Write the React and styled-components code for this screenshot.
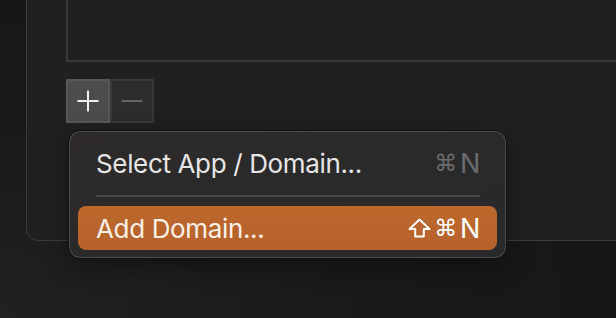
import React from "react";
import styled, { createGlobalStyle } from "styled-components";

const Global = createGlobalStyle`
  html, body { margin: 0; padding: 0; background: #17181a; overflow: hidden; }
  * { box-sizing: border-box; }
`;

const Page = styled.div`
  position: relative;
  width: 616px;
  height: 318px;
  overflow: hidden;
  padding-left: 26px;
  background: radial-gradient(ellipse at 0% 100%, #202123 0%, #18191b 45%, #141517 100%);
  font-family: Inter, "Noto Sans", "DejaVu Sans", sans-serif;
`;

const Window = styled.div`
  width: 640px;
  height: 262px;
  margin-top: -21px;
  border: 1px solid #3c3c3e;
  border-radius: 12px;
  background: #1f2022;
  padding-left: 39px;
`;

const Table = styled.div`
  height: 82px;
  border: 2px solid #38393b;
  background: #1f2022;
  margin-right: -40px;
`;

const ButtonBar = styled.div`
  display: flex;
  margin-top: 17px;
`;

const SegButton = styled.div`
  width: 44px;
  height: 44px;
  display: flex;
  align-items: center;
  justify-content: center;
  border: 2px solid ${(p) => (p.$pressed ? "#575859" : "#37383a")};
  background: ${(p) => (p.$pressed ? "#4b4c4e" : "#2b2c2e")};
`;

const Menu = styled.div`
  position: absolute;
  left: 68px;
  top: 130px;
  width: 439px;
  height: 129px;
  border-radius: 12px;
  border: 1px solid #0e0e0f;
  box-shadow: inset 0 0 0 1px #4e4e50, 0 8px 24px rgba(0, 0, 0, 0.35);
  background: linear-gradient(160deg, #2e2b2a 0%, #2a2a2b 50%, #28292a 100%);
  padding: 10px 9px 8px 9px;
  display: flex;
  flex-direction: column;
`;

const Item = styled.div`
  height: 44px;
  display: flex;
  align-items: center;
  justify-content: space-between;
  padding: 0 17px 0 18px;
  border-radius: 8px;
  background: ${(p) => (p.$active ? "linear-gradient(180deg, #bd682c, #b5612a)" : "transparent")};
  color: ${(p) => (p.$active ? "#fbf1ea" : "#e6e6e6")};
  font-size: 26px;
  letter-spacing: -0.35px;
`;

const Label = styled.span`
  padding-top: 1px;
`;

const Shortcut = styled.span`
  display: flex;
  align-items: center;
  gap: 3px;
  color: ${(p) => (p.$active ? "#ffffff" : "#6c6c6e")};
`;

const Cmd = styled.span`
  font-family: "DejaVu Sans", sans-serif;
  font-size: 23px;
  line-height: 1;
`;

const Key = styled.span`
  font-family: Inter, "DejaVu Sans", sans-serif;
  font-size: 27px;
  line-height: 1;
`;

const Separator = styled.div`
  height: 21px;
  display: flex;
  align-items: center;
  padding: 0 17px 0 18px;
  &::after {
    content: "";
    flex: 1;
    height: 2px;
    background: #47474a;
  }
`;

function Plus() {
  return (
    <svg width="22" height="22" viewBox="0 0 22 22">
      <path d="M11 0.5 V21.5 M0.5 11 H21.5" stroke="#f2f2f2" strokeWidth="2" />
    </svg>
  );
}

function Minus() {
  return (
    <svg width="22" height="22" viewBox="0 0 22 22">
      <path d="M0.5 11 H21.5" stroke="#636466" strokeWidth="2" />
    </svg>
  );
}

function ShiftIcon() {
  return (
    <svg width="23" height="20" viewBox="0 0 23 20">
      <path
        d="M11.5 1.5 L21.5 11 H15.8 V18.5 H7.2 V11 H1.5 Z"
        fill="none"
        stroke="#ffffff"
        strokeWidth="2"
        strokeLinejoin="round"
      />
    </svg>
  );
}

export default function App() {
  return (
    <>
      <Global />
      <Page>
        <Window>
          <Table />
          <ButtonBar>
            <SegButton $pressed>
              <Plus />
            </SegButton>
            <SegButton>
              <Minus />
            </SegButton>
          </ButtonBar>
        </Window>
        <Menu>
          <Item>
            <Label>Select App / Domain...</Label>
            <Shortcut>
              <Cmd>⌘</Cmd>
              <Key>N</Key>
            </Shortcut>
          </Item>
          <Separator />
          <Item $active>
            <Label>Add Domain...</Label>
            <Shortcut $active>
              <ShiftIcon />
              <Cmd>⌘</Cmd>
              <Key>N</Key>
            </Shortcut>
          </Item>
        </Menu>
      </Page>
    </>
  );
}
